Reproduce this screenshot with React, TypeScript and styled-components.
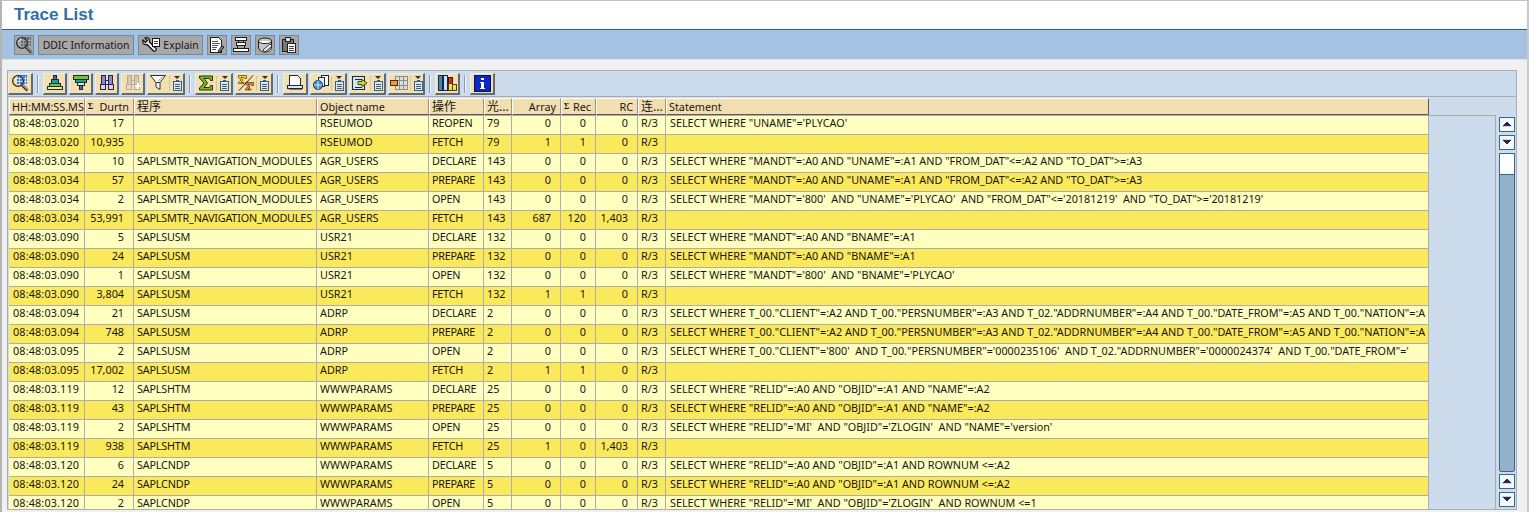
import React from "react";
import styled, { createGlobalStyle } from "styled-components";

const GlobalStyle = createGlobalStyle`
    html, body {
        margin: 0;
        padding: 0;
        overflow: hidden;
        background: #f0f0f0;
    }
`;

const uiFont = `"Noto Sans", "Liberation Sans", "Noto Sans CJK SC", sans-serif`;
const columns = "76px 49px 183px 112px 55px 28px 49px 35px 42px 28px 763px";

const Page = styled.div`
    width: 1529px;
    height: 512px;
    box-sizing: border-box;
    overflow: hidden;
    background: #f0f0f0;
    border-left: 2px solid #b4b4b4;
    border-right: 2px solid #c8c8c8;
    border-top: 1px solid #c0c0c0;
    font-family: ${uiFont};
    font-size: 10.8px;
    color: #161616;
`;

const TitleBar = styled.header`
    height: 28px;
    background: #fff;
    border-bottom: 1px solid #2e617f;
    display: flex;
    align-items: center;
    padding-left: 12px;
`;

const Title = styled.h1`
    margin: 0;
    font: 700 17px "Liberation Sans", sans-serif;
    color: #2f6ea8;
`;

const BlueBar = styled.div`
    height: 30px;
    box-sizing: border-box;
    background: #a5c2e2;
    border-bottom: 1px solid #dfe3e8;
    display: flex;
    align-items: center;
    gap: 4px;
    padding-left: 12px;
`;

const GreyButton = styled.button<{ $w: number }>`
    width: ${props => props.$w}px;
    height: 20px;
    box-sizing: border-box;
    padding: 0;
    margin: 0;
    background: #a8a8a8;
    border: 1px solid #6f8b9e;
    display: flex;
    align-items: center;
    justify-content: center;
    gap: 3px;
    font: 10.4px ${uiFont};
    color: #161616;
`;

const Panel = styled.main`
    margin: 10px 10px 0 5px;
    height: 440px;
    box-sizing: border-box;
    background: #cddcec;
    border: 1px solid #a9adb1;
`;

const Toolbar = styled.div`
    height: 26px;
    box-sizing: border-box;
    border-bottom: 1px solid #a9adb1;
    display: flex;
    align-items: center;
    gap: 2px;
`;

const ToolButton = styled.button<{ $w?: number }>`
    width: ${props => props.$w ?? 24}px;
    height: 22px;
    box-sizing: border-box;
    padding: 0;
    margin: 0;
    background: #f3dfb0;
    border: 1px solid #e9eef3;
    border-right: 2px solid #5f6c76;
    border-bottom: 2px solid #5f6c76;
    display: flex;
    align-items: center;
    justify-content: center;
    gap: 2px;
`;

const Separator = styled.span`
    width: 1px;
    height: 18px;
    background: #8c9aa8;
    border-right: 1px solid #f4f7fa;
    margin: 0 2px;
`;

const MenuPart = styled.span`
    display: flex;
    flex-direction: column;
    align-items: center;
    gap: 1px;
    padding-left: 3px;
    border-left: 1px solid #d2c8a4;
`;

const Caret = styled.span`
    width: 0;
    height: 0;
    border-left: 3px solid transparent;
    border-right: 3px solid transparent;
    border-top: 3px solid #27313a;
`;

const Workspace = styled.div`
    display: flex;
    padding: 1px 0 0 1px;
    height: 412px;
    box-sizing: border-box;
`;

const GridFrame = styled.div`
    width: 1487px;
    display: flex;
    flex-direction: column;
`;

const HeaderRow = styled.div`
    display: grid;
    grid-template-columns: ${columns};
    width: 1420px;
    height: 17px;
    flex: none;
`;

const HeaderCell = styled.div<{ $right?: boolean; $last?: boolean }>`
    box-sizing: border-box;
    height: 17px;
    line-height: 15px;
    background: #f3deb0;
    border-top: 1px solid #fff;
    border-left: 1px solid #fff;
    border-right: 1px solid ${props => props.$last ? "#5a5a5a" : "#9c9480"};
    border-bottom: 1px solid #5a5a5a;
    padding: 0 ${props => props.$right ? 4 : 2}px 0 2px;
    text-align: ${props => props.$right ? "right" : "left"};
    white-space: nowrap;
    overflow: hidden;
`;

const CjkLabel = styled.span`
    font-size: 12px;
`;

const SigmaMark = styled.span`
    float: left;
    font: bold 8px "Liberation Serif", serif;
    line-height: 15px;
`;

const RowsPane = styled.div`
    border-top: 1px solid #a9adb1;
    border-right: 1px solid #a9adb1;
    flex: 1;
    overflow: hidden;
`;

const Row = styled.div<{ $alt: boolean }>`
    display: grid;
    grid-template-columns: ${columns};
    width: 1420px;
    height: 19px;
    box-sizing: border-box;
    background: ${props => props.$alt ? "#fbe95c" : "#ffffbf"};
    border-bottom: 1px solid #adadad;
    border-right: 1px solid #a9adb1;
`;

const Cell = styled.div<{ $right?: boolean; $focus?: boolean; $inset?: number; $track?: number }>`
    box-sizing: border-box;
    height: 18px;
    line-height: 13px;
    letter-spacing: ${props => props.$track ?? 0}px;
    border-left: 1px solid ${props => props.$focus ? "#d8d8d0" : "transparent"};
    border-right: 1px solid #adadad;
    padding: ${props => props.$right ? "0 9px 0 0" : `0 0 0 ${props.$inset ?? 3}px`};
    text-align: ${props => props.$right ? "right" : "left"};
    white-space: pre;
    overflow: hidden;
`;

const Scrollbar = styled.aside`
    width: 16px;
    margin: 19px 0 0 3px;
    display: flex;
    flex-direction: column;
    gap: 3px;
`;

const ScrollButton = styled.button`
    width: 16px;
    height: 15px;
    box-sizing: border-box;
    padding: 0;
    margin: 0;
    background: #f4f8fb;
    border: 1px solid #2f6a93;
    display: flex;
    align-items: center;
    justify-content: center;
    flex: none;
`;

const Track = styled.div`
    width: 16px;
    height: 318px;
    flex: none;
    box-sizing: border-box;
    background: #fff;
    border: 1px solid #2f6a93;
    border-bottom-width: 0;
    padding-top: 20px;
`;

const Thumb = styled.div`
    height: 298px;
    background: #95b1c5;
    border-top: 1px solid #2f6a93;
    border-bottom: 1px solid #2f6a93;
    box-sizing: border-box;
`;

function Ic({ children }: { children: React.ReactNode }) {
    return <svg width="16" height="16" viewBox="0 0 16 16" shapeRendering="crispEdges">{children}</svg>;
}

const Glass = ({ tint, grid }: { tint: string; grid: string }) => (
    <svg width="18" height="18" viewBox="0 0 18 18" shapeRendering="crispEdges">
        <rect x="6" y="1" width="10" height="9" fill={tint} />
        <path d="M8 2v8M11 2v8M14 2v8M6 4h10M6 7h10" stroke={grid} />
        <circle cx="7" cy="7" r="5.3" fill="none" stroke="#2b2b2b" strokeWidth="1.3" shapeRendering="auto" />
        <path d="M3 6c1-2 2-3 4-3" stroke="#f4f8fb" fill="none" shapeRendering="auto" />
        <path d="M11 11l5.500 5.500" stroke="#2b2b2b" strokeWidth="2.6" shapeRendering="auto" />
        <path d="M11.500 11l5 5" stroke="#f2f2f2" strokeWidth="0.9" shapeRendering="auto" />
    </svg>
);

const SmallDoc = () => (
    <svg width="9" height="11" viewBox="0 0 9 11" shapeRendering="crispEdges">
        <rect x="0.500" y="1.500" width="8" height="9" fill="#dbe8f4" stroke="#3d5f78" />
        <rect x="3" y="0" width="3" height="2" fill="#3d5f78" />
        <path d="M2 4h5M2 6h5M2 8h5" stroke="#3d5f78" />
    </svg>
);

const Wrench = () => (
    <svg width="18" height="16" viewBox="0 0 18 16">
        <path d="M1 3l2.500 2.500 2-2L3 1c3-1 5 1 4.500 4l6.500 6.500c1 1.500-1 3.500-2.500 2.500L5 7.500C2 8 0 6 1 3z" fill="#ececec" stroke="#111" strokeWidth="1.2" />
        <rect x="10.500" y="1.500" width="7" height="8" fill="#fff" stroke="#111" shapeRendering="crispEdges" />
        <path d="M12 4h4M12 6h4" stroke="#444" shapeRendering="crispEdges" />
    </svg>
);

const DocPencil = () => (
    <Ic>
        <path d="M1.500 0.500h8l3 3v12h-11z" fill="#fff" stroke="#1e1e1e" />
        <path d="M3 4h6M3 6h8M3 8h6M3 10h5M3 12h4" stroke="#555" />
        <path d="M9 14l4-5 2 1-4 5z" fill="#8a8a8a" stroke="#1e1e1e" shapeRendering="auto" />
    </Ic>
);

const StackBars = () => (
    <Ic>
        <rect x="2.500" y="0.500" width="11" height="3" fill="#fff" stroke="#1e1e1e" />
        <rect x="3.500" y="5.500" width="9" height="3" fill="#fff" stroke="#1e1e1e" />
        <rect x="0.500" y="11.500" width="15" height="3" fill="#fff" stroke="#1e1e1e" />
        <path d="M5.500 3.500v2M10.500 3.500v2M4.500 8.500v3M11.500 8.500v3" stroke="#1e1e1e" />
    </Ic>
);

const CylinderPencil = () => (
    <Ic>
        <path d="M1.500 4c0-4 13-4 13 0v6c0 3-3 5-6.500 5s-6.500-2-6.500-5z" fill="#c8c8c8" stroke="#1e1e1e" shapeRendering="auto" />
        <path d="M1.500 4c0 3.500 13 3.500 13 0" fill="#fff" stroke="#1e1e1e" shapeRendering="auto" />
        <path d="M6 13l7-6 2 2-7 6z" fill="#f2f2f2" stroke="#333" shapeRendering="auto" />
    </Ic>
);

const Clipboard = () => (
    <Ic>
        <rect x="1.500" y="2.500" width="11" height="12" fill="#777" stroke="#1e1e1e" />
        <rect x="4.500" y="0.500" width="5" height="4" fill="#ddd" stroke="#1e1e1e" />
        <rect x="6.500" y="6.500" width="8" height="9" fill="#fff" stroke="#1e1e1e" />
        <path d="M8 9h5M8 11h5M8 13h5" stroke="#444" />
    </Ic>
);

const SortAsc = () => (
    <Ic>
        <rect x="6.500" y="0.500" width="3" height="4" fill="#2c74bf" stroke="#1b2b3a" />
        <rect x="4.500" y="4.500" width="7" height="4" fill="#16a2a2" stroke="#1b2b3a" />
        <rect x="2.500" y="8.500" width="11" height="3" fill="#6fc23c" stroke="#1b2b3a" />
        <rect x="0.500" y="11.500" width="15" height="3" fill="#f4e87a" stroke="#1b2b3a" />
    </Ic>
);

const SortDesc = () => (
    <Ic>
        <rect x="0.500" y="0.500" width="15" height="4" fill="#6fc23c" stroke="#1b2b3a" />
        <rect x="2.500" y="4.500" width="11" height="3" fill="#16a2a2" stroke="#1b2b3a" />
        <rect x="4.500" y="7.500" width="7" height="3" fill="#f4e87a" stroke="#1b2b3a" />
        <rect x="6.500" y="10.500" width="3" height="4" fill="#2c74bf" stroke="#1b2b3a" />
    </Ic>
);

const Binoculars = ({ off }: { off?: boolean }) => (
    <Ic>
        <g opacity={off ? 0.28 : 1}>
            <rect x="2.500" y="0.500" width="4" height="9" fill="#8a8ad0" stroke="#23234a" />
            <rect x="9.500" y="0.500" width="4" height="9" fill="#8a8ad0" stroke="#23234a" />
            <rect x="6.500" y="5.500" width="3" height="4" fill="#e4e4f6" stroke="#23234a" />
            <rect x="1.500" y="9.500" width="5" height="5" fill="#d6d6f4" stroke="#23234a" />
            <rect x="9.500" y="9.500" width="5" height="5" fill="#d6d6f4" stroke="#23234a" />
        </g>
        {off && <path d="M12.500 8v6M9.500 11h6" stroke="#fff" strokeWidth="2" />}
    </Ic>
);

const Funnel = () => (
    <svg width="17" height="16" viewBox="0 0 17 16">
        <path d="M0.500 0.500h15l-5.500 7v7l-4-2.500v-4.500z" fill="#fff" stroke="#27313a" />
        <path d="M6 7.500h4" stroke="#27313a" />
        <path d="M8 6l5-4.500" stroke="#8d9aa5" />
    </svg>
);

const Sigma = () => (
    <Ic>
        <path d="M1.500 1h13v4.500h-2l-1-2H6l3.500 4.500-3.500 4.500h5.500l1-2h2v4.500h-13v-2l4.500-5-4.500-5z" fill="#7ab52a" stroke="#20340a" shapeRendering="auto" />
    </Ic>
);

const SigmaCross = () => (
    <Ic>
        <path d="M0.500 0.500h8v3h-2l-1-1H3l2 2.500-2 2.500h3v1H0.500v-1l2.500-2.500-2.500-2.500z" fill="#f2c81f" stroke="#3a2c00" strokeWidth="0.6" shapeRendering="auto" />
        <path d="M7.500 7.500h8v3h-2l-1-1H10l2 2.500-2 2h3v1H7.500v-1l2.500-2.500-2.500-2.500z" fill="#e38a1c" stroke="#3a2000" strokeWidth="0.6" shapeRendering="auto" />
        <path d="M1 15.500L15 0.500" stroke="#2b2b2b" shapeRendering="auto" />
    </Ic>
);

const Printer = () => (
    <Ic>
        <path d="M2.500 0.500h8l3 3v8h-11z" fill="#fff" stroke="#1d2a36" />
        <rect x="0.500" y="10.500" width="15" height="3" fill="#e6e6e6" stroke="#1d2a36" />
        <rect x="1.500" y="13.500" width="13" height="1.500" fill="#6b7883" />
    </Ic>
);

const GlobeDoc = () => (
    <Ic>
        <rect x="8.500" y="0.500" width="7" height="10" fill="#fff" stroke="#1d2a36" />
        <rect x="5.500" y="2.500" width="6" height="9" fill="#e8eef4" stroke="#1d2a36" />
        <circle cx="5" cy="10" r="4.500" fill="#3f8fd6" stroke="#14344f" shapeRendering="auto" />
        <path d="M5 5.500v9M1 10h8" stroke="#d7ecfc" shapeRendering="auto" />
    </Ic>
);

const ExportDoc = () => (
    <Ic>
        <rect x="0.500" y="1.500" width="12" height="13" fill="#cfe6f0" stroke="#1d2a36" />
        <path d="M3 4h7M3 12h7" stroke="#1d2a36" />
        <path d="M6 6.500h4v-2l5 3.500-5 3.500v-2H6z" fill="#e9d21f" stroke="#34501a" shapeRendering="auto" />
    </Ic>
);

const GridPick = () => (
    <svg width="18" height="16" viewBox="0 0 18 16" shapeRendering="crispEdges">
        <path d="M5.500 1.500h12v13h-12zM5.500 5.500h12M5.500 10.500h12M9.500 1.500v13M13.500 1.500v13" fill="#ddd" stroke="#8d8d8d" />
        <rect x="0.500" y="5.500" width="7" height="5" fill="#f0982a" stroke="#4b2c06" />
    </svg>
);

const BarChart = () => (
    <svg width="19" height="17" viewBox="0 0 19 17" shapeRendering="crispEdges">
        <rect x="0.500" y="0.500" width="4" height="15" fill="#4a7fbe" stroke="#132a46" />
        <rect x="5.500" y="0.500" width="4" height="15" fill="#cfe1f0" stroke="#132a46" />
        <rect x="10.500" y="2.500" width="4" height="6" fill="#d92d20" stroke="#4a0f0a" />
        <rect x="10.500" y="8.500" width="4" height="7" fill="#f4e04a" stroke="#4a400a" />
        <rect x="14.500" y="9.500" width="4" height="6" fill="#f4e04a" stroke="#4a400a" />
    </svg>
);

const Info = () => (
    <svg width="17" height="17" viewBox="0 0 17 17" shapeRendering="crispEdges">
        <rect x="0.500" y="0.500" width="16" height="16" fill="#0b27c8" stroke="#06114f" />
        <rect x="7" y="3" width="3" height="2" fill="#fff" />
        <path d="M6 7h4v6h1v1H6v-1h1V8H6z" fill="#fff" />
    </svg>
);

const Arrow = ({ up }: { up?: boolean }) => (
    <svg width="10" height="7" viewBox="0 0 10 7" shapeRendering="crispEdges">
        <path d={up ? "M5 0l4 5H1z" : "M1 1h8L5 6z"} fill="#252b45" />
        <rect x="0" y={up ? 5 : 0} width="10" height="1" fill="#c9d3e6" />
    </svg>
);

const LayoutMenu = () => (
    <MenuPart>
        <Caret />
        <SmallDoc />
    </MenuPart>
);

type TraceRow = [string, string, string, string, string, string, string, string, string, string];

const mandtBind = `SELECT WHERE "MANDT"=:A0 AND "UNAME"=:A1 AND "FROM_DAT"<=:A2 AND "TO_DAT">=:A3`;
const usrBind = `SELECT WHERE "MANDT"=:A0 AND "BNAME"=:A1`;
const adrpBind = `SELECT WHERE T_00."CLIENT"=:A2 AND T_00."PERSNUMBER"=:A3 AND T_02."ADDRNUMBER"=:A4 AND T_00."DATE_FROM"=:A5 AND T_00."NATION"=:A`;
const wwwBind = `SELECT WHERE "RELID"=:A0 AND "OBJID"=:A1 AND "NAME"=:A2`;
const cndpBind = `SELECT WHERE "RELID"=:A0 AND "OBJID"=:A1 AND ROWNUM <=:A2`;

const traceRows: TraceRow[] = [
    ["08:48:03.020", "17", "", "RSEUMOD", "REOPEN", "79", "0", "0", "0", `SELECT WHERE "UNAME"='PLYCAO'`],
    ["08:48:03.020", "10,935", "", "RSEUMOD", "FETCH", "79", "1", "1", "0", ""],
    ["08:48:03.034", "10", "SAPLSMTR_NAVIGATION_MODULES", "AGR_USERS", "DECLARE", "143", "0", "0", "0", mandtBind],
    ["08:48:03.034", "57", "SAPLSMTR_NAVIGATION_MODULES", "AGR_USERS", "PREPARE", "143", "0", "0", "0", mandtBind],
    ["08:48:03.034", "2", "SAPLSMTR_NAVIGATION_MODULES", "AGR_USERS", "OPEN", "143", "0", "0", "0", `SELECT WHERE "MANDT"='800'  AND "UNAME"='PLYCAO'  AND "FROM_DAT"<='20181219'  AND "TO_DAT">='20181219'`],
    ["08:48:03.034", "53,991", "SAPLSMTR_NAVIGATION_MODULES", "AGR_USERS", "FETCH", "143", "687", "120", "1,403", ""],
    ["08:48:03.090", "5", "SAPLSUSM", "USR21", "DECLARE", "132", "0", "0", "0", usrBind],
    ["08:48:03.090", "24", "SAPLSUSM", "USR21", "PREPARE", "132", "0", "0", "0", usrBind],
    ["08:48:03.090", "1", "SAPLSUSM", "USR21", "OPEN", "132", "0", "0", "0", `SELECT WHERE "MANDT"='800'  AND "BNAME"='PLYCAO'`],
    ["08:48:03.090", "3,804", "SAPLSUSM", "USR21", "FETCH", "132", "1", "1", "0", ""],
    ["08:48:03.094", "21", "SAPLSUSM", "ADRP", "DECLARE", "2", "0", "0", "0", adrpBind],
    ["08:48:03.094", "748", "SAPLSUSM", "ADRP", "PREPARE", "2", "0", "0", "0", adrpBind],
    ["08:48:03.095", "2", "SAPLSUSM", "ADRP", "OPEN", "2", "0", "0", "0", `SELECT WHERE T_00."CLIENT"='800'  AND T_00."PERSNUMBER"='0000235106'  AND T_02."ADDRNUMBER"='0000024374'  AND T_00."DATE_FROM"='`],
    ["08:48:03.095", "17,002", "SAPLSUSM", "ADRP", "FETCH", "2", "1", "1", "0", ""],
    ["08:48:03.119", "12", "SAPLSHTM", "WWWPARAMS", "DECLARE", "25", "0", "0", "0", wwwBind],
    ["08:48:03.119", "43", "SAPLSHTM", "WWWPARAMS", "PREPARE", "25", "0", "0", "0", wwwBind],
    ["08:48:03.119", "2", "SAPLSHTM", "WWWPARAMS", "OPEN", "25", "0", "0", "0", `SELECT WHERE "RELID"='MI'  AND "OBJID"='ZLOGIN'  AND "NAME"='version'`],
    ["08:48:03.119", "938", "SAPLSHTM", "WWWPARAMS", "FETCH", "25", "1", "0", "1,403", ""],
    ["08:48:03.120", "6", "SAPLCNDP", "WWWPARAMS", "DECLARE", "5", "0", "0", "0", cndpBind],
    ["08:48:03.120", "24", "SAPLCNDP", "WWWPARAMS", "PREPARE", "5", "0", "0", "0", cndpBind],
    ["08:48:03.120", "2", "SAPLCNDP", "WWWPARAMS", "OPEN", "5", "0", "0", "0", `SELECT WHERE "RELID"='MI'  AND "OBJID"='ZLOGIN'  AND ROWNUM <=1`],
];

export default function App() {
    return (
        <Page>
            <GlobalStyle />
            <TitleBar>
                <Title>Trace List</Title>
            </TitleBar>
            <BlueBar>
                <GreyButton $w={20}><Glass tint="#5f6a76" grid="#9aa0a6" /></GreyButton>
                <GreyButton $w={96}>DDIC Information</GreyButton>
                <GreyButton $w={65}><Wrench />Explain</GreyButton>
                <GreyButton $w={20}><DocPencil /></GreyButton>
                <GreyButton $w={20}><StackBars /></GreyButton>
                <GreyButton $w={20}><CylinderPencil /></GreyButton>
                <GreyButton $w={20}><Clipboard /></GreyButton>
            </BlueBar>
            <Panel>
                <Toolbar>
                    <ToolButton $w={25}><Glass tint="#2f7fe0" grid="#bcd6f4" /></ToolButton>
                    <Separator />
                    <ToolButton><SortAsc /></ToolButton>
                    <ToolButton><SortDesc /></ToolButton>
                    <ToolButton><Binoculars /></ToolButton>
                    <ToolButton><Binoculars off /></ToolButton>
                    <ToolButton $w={38}><Funnel /><LayoutMenu /></ToolButton>
                    <Separator />
                    <ToolButton $w={38}><Sigma /><LayoutMenu /></ToolButton>
                    <ToolButton $w={38}><SigmaCross /><LayoutMenu /></ToolButton>
                    <Separator />
                    <ToolButton $w={25}><Printer /></ToolButton>
                    <ToolButton $w={37}><GlobeDoc /><LayoutMenu /></ToolButton>
                    <ToolButton $w={37}><ExportDoc /><LayoutMenu /></ToolButton>
                    <ToolButton $w={37}><GridPick /><LayoutMenu /></ToolButton>
                    <Separator />
                    <ToolButton $w={25}><BarChart /></ToolButton>
                    <Separator />
                    <ToolButton $w={25}><Info /></ToolButton>
                </Toolbar>
                <Workspace>
                    <GridFrame>
                        <HeaderRow>
                            <HeaderCell>HH:MM:SS.MS</HeaderCell>
                            <HeaderCell $right><SigmaMark>Σ</SigmaMark>Durtn</HeaderCell>
                            <HeaderCell><CjkLabel>程序</CjkLabel></HeaderCell>
                            <HeaderCell>Object name</HeaderCell>
                            <HeaderCell><CjkLabel>操作</CjkLabel></HeaderCell>
                            <HeaderCell><CjkLabel>光...</CjkLabel></HeaderCell>
                            <HeaderCell $right>Array</HeaderCell>
                            <HeaderCell $right><SigmaMark>Σ</SigmaMark>Rec</HeaderCell>
                            <HeaderCell $right>RC</HeaderCell>
                            <HeaderCell><CjkLabel>连...</CjkLabel></HeaderCell>
                            <HeaderCell $last>Statement</HeaderCell>
                        </HeaderRow>
                        <RowsPane>
                            {traceRows.map((row, i) => (
                                <Row key={i} $alt={i % 2 === 1}>
                                    <Cell $focus={i === 0} $track={0.15}>{row[0]}</Cell>
                                    <Cell $right>{row[1]}</Cell>
                                    <Cell $inset={2} $track={-0.18}>{row[2]}</Cell>
                                    <Cell $inset={2}>{row[3]}</Cell>
                                    <Cell $inset={2} $track={-0.25}>{row[4]}</Cell>
                                    <Cell $inset={2}>{row[5]}</Cell>
                                    <Cell $right>{row[6]}</Cell>
                                    <Cell $right>{row[7]}</Cell>
                                    <Cell $right>{row[8]}</Cell>
                                    <Cell $inset={2}>R/3</Cell>
                                    <Cell>{row[9]}</Cell>
                                </Row>
                            ))}
                        </RowsPane>
                    </GridFrame>
                    <Scrollbar>
                        <ScrollButton><Arrow up /></ScrollButton>
                        <ScrollButton><Arrow /></ScrollButton>
                        <Track><Thumb /></Track>
                        <ScrollButton><Arrow up /></ScrollButton>
                        <ScrollButton><Arrow /></ScrollButton>
                    </Scrollbar>
                </Workspace>
            </Panel>
        </Page>
    );
}
